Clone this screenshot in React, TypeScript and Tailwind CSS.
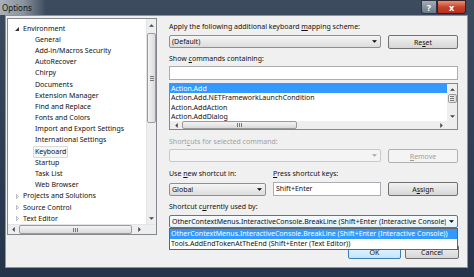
import React from 'react';

const tree = [
  { label: 'Environment', level: 0, open: true },
  { label: 'General', level: 1 },
  { label: 'Add-in/Macros Security', level: 1 },
  { label: 'AutoRecover', level: 1 },
  { label: 'Chirpy', level: 1 },
  { label: 'Documents', level: 1 },
  { label: 'Extension Manager', level: 1 },
  { label: 'Find and Replace', level: 1 },
  { label: 'Fonts and Colors', level: 1 },
  { label: 'Import and Export Settings', level: 1 },
  { label: 'International Settings', level: 1 },
  { label: 'Keyboard', level: 1, selected: true },
  { label: 'Startup', level: 1 },
  { label: 'Task List', level: 1 },
  { label: 'Web Browser', level: 1 },
  { label: 'Projects and Solutions', level: 0 },
  { label: 'Source Control', level: 0 },
  { label: 'Text Editor', level: 0 },
];

const commands = [
  'Action.Add',
  'Action.Add.NETFrameworkLaunchCondition',
  'Action.AddAction',
  'Action.AddDialog',
];

function Arrow({ dir, className = '' }: { dir: 'up' | 'down' | 'left' | 'right'; className?: string }) {
  const pts = {
    up: '0,3 3,0 6,3',
    down: '0,0 6,0 3,3',
    left: '3,0 3,6 0,3',
    right: '0,0 0,6 3,3',
  }[dir];
  const vertical = dir === 'up' || dir === 'down';
  return (
    <svg width={vertical ? 5 : 3} height={vertical ? 3 : 5} viewBox={vertical ? '0 0 6 3' : '0 0 3 6'} className={className}>
      <polygon points={pts} fill="currentColor" />
    </svg>
  );
}

function Combo({ text, className = '', disabled = false, focused = false }: { text: string; className?: string; disabled?: boolean; focused?: boolean }) {
  return (
    <div
      className={`flex items-center h-[13px] border ${
        focused ? 'border-[#3c7fb1] bg-gradient-to-b from-[#f6fbfe] to-[#e3f1fb]' : disabled ? 'border-[#c9c9c9] bg-[#f4f4f4]' : 'border-[#8e8f8f] bg-gradient-to-b from-[#f5f5f5] to-[#dddddd]'
      } rounded-[2px] pl-[2px] pr-[3px] gap-[3px] ${className}`}
    >
      <span className="flex-1 overflow-hidden whitespace-nowrap leading-[11px]">{text}</span>
      <Arrow dir="down" className={disabled ? 'text-[#a7a7a7]' : 'text-black'} />
    </div>
  );
}

function Button({ children, className = '', disabled = false, isDefault = false }: { children: React.ReactNode; className?: string; disabled?: boolean; isDefault?: boolean }) {
  return (
    <div
      className={`flex items-center justify-center h-[14px] rounded-[2px] border leading-[11px] ${
        disabled
          ? 'border-[#adb2b5] bg-[#f4f4f4] text-[#a0a0a0]'
          : isDefault
          ? 'border-[#3c7fb1] bg-gradient-to-b from-[#eaf6fd] to-[#bee6fd]'
          : 'border-[#707070] bg-gradient-to-b from-[#f2f2f2] to-[#d6d6d6]'
      } ${className}`}
    >
      {children}
    </div>
  );
}

function Thumb({ vertical, className = '' }: { vertical?: boolean; className?: string }) {
  return (
    <div
      className={`rounded-[2px] border border-[#9a9a9a] flex items-center justify-center ${
        vertical ? 'bg-gradient-to-r from-[#f4f4f4] to-[#dadada]' : 'bg-gradient-to-b from-[#f4f4f4] to-[#dadada]'
      } ${className}`}
    >
      {vertical ? (
        <div className="flex flex-col gap-[1px]">
          <div className="w-[4px] h-px bg-[#777]" />
          <div className="w-[4px] h-px bg-[#777]" />
          <div className="w-[4px] h-px bg-[#777]" />
        </div>
      ) : (
        <div className="flex gap-[1px]">
          <div className="w-px h-[4px] bg-[#777]" />
          <div className="w-px h-[4px] bg-[#777]" />
          <div className="w-px h-[4px] bg-[#777]" />
        </div>
      )}
    </div>
  );
}

export default function App() {
  return (
    <div className="w-[474px] h-[277px] flex flex-col bg-gradient-to-b from-[#3c4b5e] to-[#25344a] overflow-hidden font-['Noto_Sans',sans-serif] text-[7px] text-[#111] relative">
      {/* title bar */}
      <div className="h-[15px] flex items-start shrink-0 relative">
        <div className="h-[15px] pl-[2px] pr-[14px] flex items-center bg-gradient-to-r from-[#a9b0b8] via-[#8a949f] to-transparent text-[8px] text-[#101010]">
          Options
        </div>
        <div className="flex-1" />
        <div className="flex mr-[8px]">
          <div className="w-[16px] h-[14px] border border-[#2a3442] rounded-bl-[3px] bg-gradient-to-b from-[#a4acb6] to-[#6b7888] text-white text-[9px] font-bold flex items-center justify-center leading-none">
            ?
          </div>
          <div className="w-[29px] h-[14px] border border-[#3a1d1d] rounded-br-[3px] bg-gradient-to-b from-[#e6907d] via-[#c8432b] to-[#b6301b] text-white text-[9px] font-bold flex items-center justify-center leading-none">
            x
          </div>
        </div>
      </div>

      <div className="flex-1 flex pl-[5px] pr-[6px] pb-[9px]">
        <div className="flex-1 bg-[#f0f0f0] border border-[#8895a5] flex">
          {/* tree */}
          <div className="ml-[1px] mt-[2px] w-[150px] h-[217px] border border-[#828790] bg-white flex flex-col">
            <div className="flex-1 flex min-h-0">
              <div className="flex-1 pt-[4px] overflow-hidden">
                {tree.map((t) => (
                  <div key={t.label} className="h-[11.2px] flex items-center whitespace-nowrap">
                    {t.level === 0 ? (
                      <div className="w-[14px] flex justify-end pr-[3px]">
                        {t.open ? (
                          <svg width="4" height="4" viewBox="0 0 4 4"><polygon points="4,0 4,4 0,4" fill="#333" /></svg>
                        ) : (
                          <svg width="3" height="5" viewBox="0 0 3 5"><polygon points="0.4,0.4 2.6,2.5 0.4,4.6" fill="none" stroke="#a6a6a6" strokeWidth="0.8" /></svg>
                        )}
                      </div>
                    ) : (
                      <div className="w-[26px]" />
                    )}
                    <span
                      className={`leading-[10px] px-[1px] ${
                        t.selected ? 'border border-[#d9d9d9] bg-[#f7f7f7] rounded-[1px] -ml-[1px]' : ''
                      }`}
                    >
                      {t.label}
                    </span>
                  </div>
                ))}
              </div>
              <div className="w-[10px] bg-[#eeeeee] border-l border-[#e4e4e4] flex flex-col items-center">
                <div className="h-[12px] flex items-center"><Arrow dir="up" className="text-[#444]" /></div>
                <Thumb vertical className="w-[9px] h-[90px] mt-[2px]" />
                <div className="flex-1" />
                <div className="h-[12px] flex items-center"><Arrow dir="down" className="text-[#444]" /></div>
              </div>
            </div>
            <div className="h-[10px] flex bg-[#eeeeee] border-t border-[#e4e4e4]">
              <div className="w-[11px] flex items-center justify-center"><Arrow dir="left" className="text-[#444]" /></div>
              <Thumb className="w-[113px] h-[9px]" />
              <div className="flex-1 flex items-center justify-center"><Arrow dir="right" className="text-[#444]" /></div>
              <div className="w-[10px] bg-[#eeeeee]" />
            </div>
          </div>

          {/* right panel */}
          <div className="ml-[12px] w-[289px] flex flex-col">
            <div className="mt-[6px] h-[10px] leading-[10px] whitespace-nowrap">
              Apply the following additional keyboard <span className="underline">m</span>apping scheme:
            </div>
            <div className="mt-[3px] flex gap-[7px]">
              <Combo text="(Default)" className="w-[212px]" />
              <Button className="w-[70px]">
                Re<span className="underline">s</span>et
              </Button>
            </div>
            <div className="mt-[5px] h-[10px] leading-[10px]">
              Show <span className="underline">c</span>ommands containing:
            </div>
            <div className="mt-[2px] h-[14px] border border-[#abadb3] bg-white" />
            <div className="mt-[3px] h-[47px] border border-[#828790] bg-white flex flex-col">
              <div className="flex-1 flex min-h-0">
                <div className="flex-1 overflow-hidden">
                  {commands.map((c, i) => (
                    <div
                      key={c}
                      className={`h-[9.4px] leading-[9.4px] pl-[1px] whitespace-nowrap ${
                        i === 0 ? 'bg-[#3399ff] text-white' : ''
                      }`}
                    >
                      {c}
                    </div>
                  ))}
                </div>
                <div className="w-[10px] bg-[#eeeeee] flex flex-col items-center">
                  <div className="h-[10px] flex items-center"><Arrow dir="up" className="text-[#444]" /></div>
                  <Thumb vertical className="w-[9px] h-[9px]" />
                  <div className="flex-1" />
                  <div className="h-[9px] flex items-center"><Arrow dir="down" className="text-[#444]" /></div>
                </div>
              </div>
              <div className="h-[8px] flex bg-[#eeeeee]">
                <div className="w-[12px] flex items-center justify-center"><Arrow dir="left" className="text-[#444]" /></div>
                <Thumb className="w-[115px] h-[8px]" />
                <div className="flex-1 flex items-center justify-end pr-[4px]"><Arrow dir="right" className="text-[#444]" /></div>
                <div className="w-[10px]" />
              </div>
            </div>
            <div className="mt-[7px] h-[10px] leading-[10px] text-[#a0a0a0]">
              Short<span className="underline">c</span>uts for selected command:
            </div>
            <div className="mt-[2px] flex gap-[7px]">
              <Combo text="" disabled className="w-[212px]" />
              <Button disabled className="w-[70px]">
                <span className="underline">R</span>emove
              </Button>
            </div>
            <div className="mt-[6px] h-[10px] leading-[10px] flex">
              <div className="w-[104px]">
                Use <span className="underline">n</span>ew shortcut in:
              </div>
              <div>
                <span className="underline">P</span>ress shortcut keys:
              </div>
            </div>
            <div className="mt-[3px] flex gap-[7px] items-center">
              <Combo text="Global" className="w-[97px]" />
              <div className="w-[108px] h-[14px] border border-[#abadb3] bg-white pl-[2px] leading-[12px]">Shift+Enter</div>
              <Button className="w-[70px]">
                A<span className="underline">s</span>sign
              </Button>
            </div>
            <div className="mt-[6px] h-[10px] leading-[10px]">
              Shortcut c<span className="underline">u</span>rrently used by:
            </div>
            <div className="mt-[3px] relative">
              <Combo focused text="OtherContextMenus.InteractiveConsole.BreakLine (Shift+Enter (Interactive Console))" className="w-[289px]" />
              <div className="absolute left-0 top-full w-[289px] border border-[#646464] bg-white z-10">
                <div className="h-[10px] leading-[10px] pl-[1px] bg-[#3399ff] text-white whitespace-nowrap overflow-hidden">
                  OtherContextMenus.InteractiveConsole.BreakLine (Shift+Enter (Interactive Console))
                </div>
                <div className="h-[10px] leading-[10px] pl-[1px] whitespace-nowrap overflow-hidden">
                  Tools.AddEndTokenAtTheEnd (Shift+Enter (Text Editor))
                </div>
              </div>
            </div>
            <div className="mt-[17px] flex justify-end gap-[4px] -mr-[1px]">
              <Button isDefault className="w-[53px]">OK</Button>
              <Button className="w-[54px]">Cancel</Button>
            </div>
          </div>
        </div>
      </div>
    </div>
  );
}
